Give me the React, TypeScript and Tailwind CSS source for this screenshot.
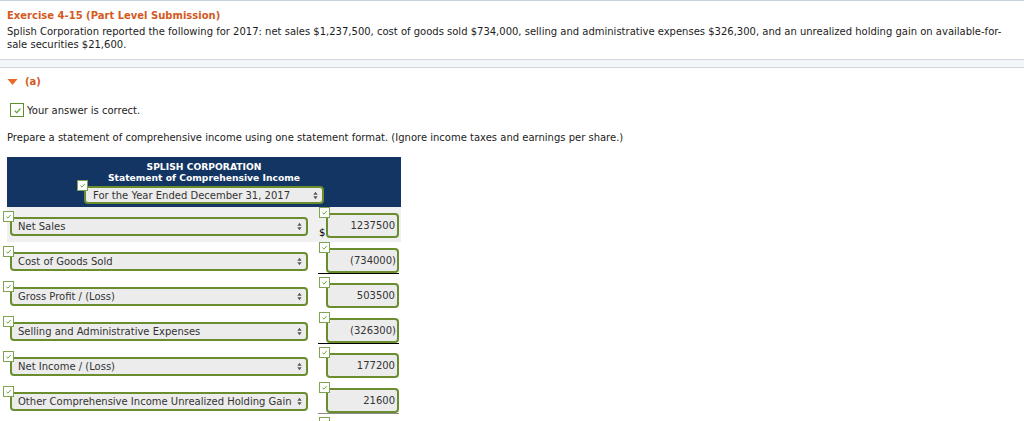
import type { ReactNode } from "react";

type Row = {
  label: string;
  amount: string;
  shaded?: boolean;
  dollar?: boolean;
  line?: "black" | "gray";
  negative?: boolean;
};

// last row only peeks in at the bottom edge
const rows: Row[] = [
  { label: "Net Sales", amount: "1237500", shaded: true, dollar: true },
  { label: "Cost of Goods Sold", amount: "(734000)", line: "black", negative: true },
  { label: "Gross Profit / (Loss)", amount: "503500" },
  { label: "Selling and Administrative Expenses", amount: "(326300)", line: "black", negative: true },
  { label: "Net Income / (Loss)", amount: "177200" },
  { label: "Other Comprehensive Income Unrealized Holding Gain", amount: "21600", line: "gray" },
  { label: "", amount: "" },
];

function Check({ big }: { big?: boolean }) {
  return (
    <span
      className={
        big
          ? "flex h-[14px] w-[14px] items-center justify-center border border-[#5e8e2f] bg-white"
          : "flex h-[11px] w-[11px] items-center justify-center border border-[#7fa352] bg-white"
      }
    >
      <svg viewBox="0 0 10 10" className={big ? "h-[9px] w-[9px]" : "h-[7px] w-[7px]"}>
        <path d="M2 5.3 L4.2 7.3 L8.2 2.8" fill="none" stroke="#58a02c" strokeWidth="1.3" />
      </svg>
    </span>
  );
}

function Graded({ children }: { children: ReactNode }) {
  return (
    <div className="relative">
      <span className="absolute -left-[7px] -top-[6px] z-10">
        <Check />
      </span>
      {children}
    </div>
  );
}

function Arrows() {
  return (
    <svg viewBox="0 0 6 10" className="h-[9px] w-[5px]">
      <path d="M3 0.6 L5.6 4 H0.4Z M3 9.4 L5.6 6 H0.4Z" fill="#555" />
    </svg>
  );
}

function Select({ label, width }: { label: string; width: string }) {
  return (
    <div
      className={`flex h-[19px] ${width} items-center justify-between rounded-[4px] border-2 border-[#6a8e2e] bg-[#ececec] pl-[6px] pr-[4px] text-[#333]`}
    >
      <span className="whitespace-nowrap leading-[13px]">{label}</span>
      <Arrows />
    </div>
  );
}

function StatementRow({ row }: { row: Row }) {
  return (
    <div className={`flex h-[35px] ${row.shaded ? "bg-[#f0f0f0]" : ""}`}>
      <div className="w-[311px] pl-[3px] pt-[10px]">
        <Graded>
          <Select label={row.label} width="w-[298px]" />
        </Graded>
      </div>
      <div className="relative w-[83px]">
        {row.dollar && (
          <span className="absolute left-[1px] top-[19px] leading-[13px] text-black">$</span>
        )}
        <div className="ml-[8px] pt-[6px]">
          <Graded>
            <div
              className={`flex h-[25px] w-[73px] items-center justify-end rounded-[4px] border-2 border-[#6a8e2e] bg-[#ececec] text-[#333] ${row.negative ? "pr-[1px]" : "pr-[2px]"}`}
            >
              {row.amount}
            </div>
          </Graded>
        </div>
        {row.line === "black" && <div className="h-px w-[81px] bg-black" />}
        {row.line === "gray" && <div className="h-px w-[81px] bg-[#8a8a8a]" />}
      </div>
    </div>
  );
}

export default function App() {
  return (
    <div className="h-[421px] overflow-hidden bg-white font-['DejaVu_Sans',Verdana,sans-serif] text-[10px] text-[#1c1c1c]">
      <div className="border-t border-[#c9d1da] px-[7px] pb-[8px] pt-[8px]">
        <h1 className="font-bold leading-[13px] text-[#d35a1f]">
          Exercise 4-15 (Part Level Submission)
        </h1>
        <p className="mt-[3px] leading-[13px]">
          Splish Corporation reported the following for 2017: net sales $1,237,500, cost of goods
          sold $734,000, selling and administrative expenses $326,300, and an unrealized holding
          gain on available-for-sale securities $21,600.
        </p>
      </div>
      <div className="h-[9px] border-y border-[#cfd6dd] bg-[#f4f7f9]" />

      <div className="px-[7px]">
        <div className="mt-[7px] flex items-center gap-[7px] leading-[13px]">
          <svg viewBox="0 0 10 6" className="h-[6px] w-[11px]">
            <path d="M0 0 H10 L5 6Z" fill="#e8692a" />
          </svg>
          <span className="font-bold text-[#d35a1f]">(a)</span>
        </div>

        <div className="mt-[15px] flex items-center gap-[3px] pl-[3px] leading-[13px]">
          <Check big />
          <span>Your answer is correct.</span>
        </div>

        <p className="mt-[14px] leading-[13px]">
          Prepare a statement of comprehensive income using one statement format. (Ignore income
          taxes and earnings per share.)
        </p>

        <div className="mt-[13px] w-[394px]">
          <div className="flex h-[50px] flex-col items-center bg-[#133563] pt-[4px] text-[9.2px] font-bold text-white">
            <div className="leading-[11px]">SPLISH CORPORATION</div>
            <div className="leading-[11px]">Statement of Comprehensive Income</div>
            <div className="mt-[3px] text-[10px] font-normal">
              <Graded>
                <div className="flex h-[18px] w-[240px] items-center justify-between rounded-[4px] border-2 border-[#6a8e2e] bg-[#ececec] pl-[7px] pr-[4px] text-[#333]">
                  <span className="leading-[13px]">For the Year Ended December 31, 2017</span>
                  <Arrows />
                </div>
              </Graded>
            </div>
          </div>
          {rows.map((row, i) => (
            <StatementRow key={i} row={row} />
          ))}
        </div>
      </div>
    </div>
  );
}
